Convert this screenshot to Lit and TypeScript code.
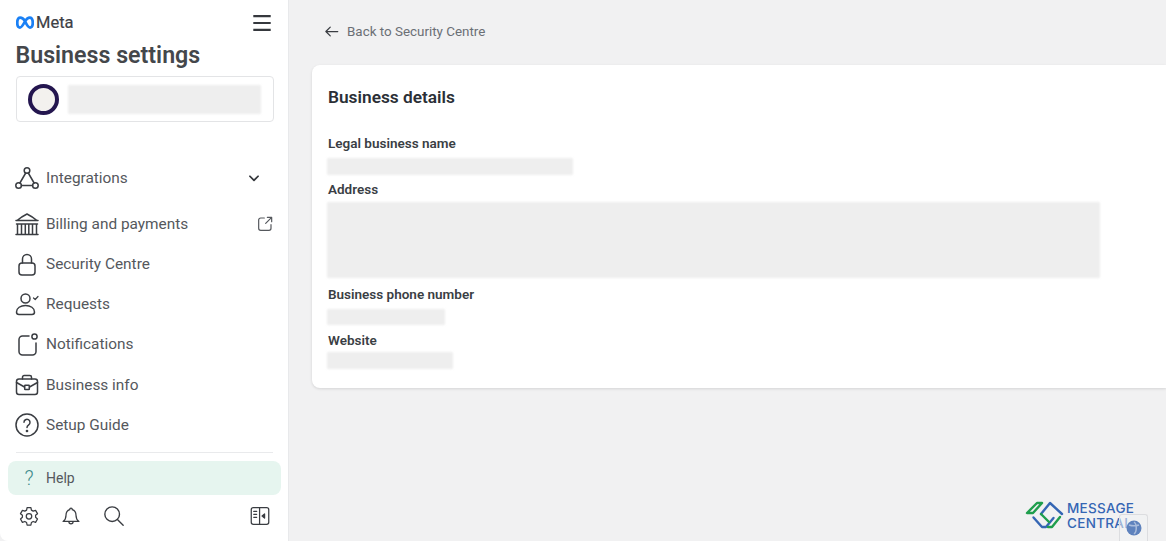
import { LitElement, html, css, svg } from "lit";
import { customElement } from "lit/decorators.js";

const I = (w: number, body: unknown) => html`<svg width=${w} height=${w} viewBox="0 0 24 24" fill="none" stroke="#3a3d42" stroke-width="1.5" stroke-linecap="round" stroke-linejoin="round">${body}</svg>`;

const nav = [
  { label: "Integrations", cls: "first", end: "chev", icon: svg`<circle cx="12" cy="4.500" r="2.800"/><circle cx="3.600" cy="19.500" r="2.800"/><circle cx="20.400" cy="19.500" r="2.800"/><path d="M10.700 7 4.900 17M13.300 7l5.800 10M6.400 19.500h11.200"/>` },
  { label: "Billing and payments", cls: "second", end: "ext", icon: svg`<path d="M2 8.500C5 6 9 3.500 12 2c3 1.500 7 4 10 6.500zM1 8.500h22M1.500 12h21M1 22.500h22M2.500 12v10.500M6.500 12v10.500M10.300 12v10.500M13.800 12v10.500M17.500 12v10.500M21.500 12v10.500"/>` },
  { label: "Security Centre", cls: "", end: "", icon: svg`<rect x="4" y="11" width="16" height="12" rx="3"/><path d="M7.500 11V7a4.500 4.500 0 0 1 9 0v4"/>` },
  { label: "Requests", cls: "", end: "", icon: svg`<circle cx="10.500" cy="6.500" r="4.500"/><path d="M1.500 20c0-4 4-6.500 9-6.500s9 2.500 9 6.500c0 1.700-1 2.500-2.500 2.500H4c-1.500 0-2.500-.8-2.500-2.500z"/><path d="m18.500 6 1.700 1.500L23 4.500" stroke-width="1.200"/>` },
  { label: "Notifications", cls: "", end: "", icon: svg`<path d="M14 4H7.500A3.500 3.500 0 0 0 4 7.500v12A3.500 3.500 0 0 0 7.500 23h10a3.500 3.500 0 0 0 3.500-3.500V11"/><circle cx="19.500" cy="4.500" r="2.600"/>` },
  { label: "Business info", cls: "", end: "", icon: svg`<rect x="1.500" y="6" width="21" height="15.500" rx="2.500"/><path d="M7.500 6V4.200c0-1 .7-1.700 1.700-1.700h5.600c1 0 1.700.7 1.700 1.700V6M1.500 9.500 9.500 14M22.500 9.500 14.500 14"/><rect x="9.700" y="12.300" width="4.600" height="4.200" rx=".6"/>` },
  { label: "Setup Guide", cls: "", end: "", icon: svg`<circle cx="12" cy="12" r="11"/><path d="M9 9.300a3 3 0 1 1 4.700 2.500c-1.100.8-1.700 1.400-1.700 2.700"/><circle cx="12" cy="18" r=".6" fill="#3a3d42"/>` },
];

@customElement("app-root")
export class AppRoot extends LitElement {
  static styles = css`
    :host { display: block; width: 1166px; height: 541px; overflow: hidden; position: relative; font-family: Roboto, "Liberation Sans", sans-serif; color: #4b4f56; }
    * { box-sizing: border-box; }
    svg { display: block; flex: none; }
    .page { display: flex; height: 541px; background: #f1f1f2; }
    .side { width: 289px; flex: none; height: 541px; background: #fff; border-right: 1px solid #e8e9eb; border-bottom-left-radius: 8px; padding: 0 15px; display: flex; flex-direction: column; }
    .top { display: flex; align-items: center; justify-content: space-between; height: 45px; padding-left: 1px; }
    .brand { display: flex; align-items: center; gap: 2px; font-size: 16.500px; font-weight: 400; color: #3d4045; -webkit-text-stroke: .2px #3d4045; }
    .title { font-size: 23.200px; line-height: 27px; font-weight: 600; color: #44474b; margin: -3px 0 0 .5px; white-space: nowrap; }
    .account { margin: 7px 0 0 .5px; width: 258px; height: 46px; border: 1px solid #e3e4e6; border-radius: 4px; display: flex; align-items: center; gap: 9px; padding: 0 11px; }
    .avatar { width: 31px; height: 31px; border-radius: 50%; border: 4px solid #24164f; background: #f3f1ee; flex: none; }
    .blur { background: #eeeeee; filter: blur(1px); border-radius: 1px; }
    .acct-name { width: 193px; height: 29px; }
    .nav { margin-top: 35.500px; display: flex; flex-direction: column; }
    .item { height: 40.400px; display: flex; align-items: center; gap: 7px; font-size: 15.400px; color: #55585d; white-space: nowrap; }
    .item.first { height: 40px; margin-bottom: 6px; }
    .item.second { height: 40px; }
    .item .ico { width: 24px; display: flex; justify-content: center; flex: none; }
    .end { margin-left: auto; }
    .end.chev { margin-right: 12px; }
    .rule { height: 1px; background: #e9eaec; margin: 6.500px 1px 8px 1px; width: 257px; flex: none; }
    .help { margin: 0 -7px; height: 34px; width: 273px; flex: none; background: #e6f5ef; border-radius: 8px; display: flex; align-items: center; gap: 10px; padding-left: 14px; font-size: 14px; color: #55585d; }
    .q { width: 14px; text-align: center; font-size: 20px; color: #3f8c8c; font-weight: 300; }
    .tools { margin-top: 10px; display: flex; align-items: center; gap: 22px; padding: 0 3px 0 4px; }
    .tools .right { margin-left: auto; }
    .main { flex: 1; min-width: 0; padding: 0 0 0 23px; }
    .back { height: 65px; display: flex; align-items: center; gap: 8px; padding: 0 0 3px 12px; font-size: 13.400px; color: #6b6f75; }
    .card { height: 323px; background: #fff; border-radius: 8px 0 0 8px; box-shadow: 0 1px 3px rgba(0,0,0,.12); padding: 19px 0 0 16px; }
    h2 { margin: 0; font-size: 17.300px; line-height: 26px; font-weight: 600; color: #2b2f36; }
    .label { font-size: 13.500px; line-height: 20px; font-weight: 600; color: #3a3e44; }
    .first-label { margin-top: 23px; }
    .f1 { width: 246px; height: 17px; margin: 5px 0 4px -1px; }
    .f2 { width: 773px; height: 76px; margin: 3px 0 6px -1px; }
    .f3 { width: 118px; height: 16px; margin: 5px 0 5px -1px; }
    .f4 { width: 126px; height: 17px; margin: 2px 0 0 -1px; }
    .mark { position: absolute; left: 1025px; top: 500px; display: flex; align-items: center; gap: 3px; }
    .mark-text { font-size: 13.500px; line-height: 14.500px; padding-top: 1px; font-weight: 500; color: #3566b4; letter-spacing: .3px; font-family: Inter, Roboto, sans-serif; }
    .badge { position: absolute; left: 1119px; top: 514px; width: 29px; height: 27px; background: rgba(241,242,244,.55); border: 1px solid #dcdde0; border-bottom: none; border-radius: 3px 3px 0 0; display: flex; align-items: center; justify-content: center; }
  `;

  private endIcon(e: string) {
    if (e === "chev") return html`<span class="end chev">${I(14, svg`<path d="m5 9 7 7 7-7" stroke-width="3" stroke="#33363b"/>`)}</span>`;
    if (e === "ext") return html`<span class="end">${I(16, svg`<path d="M11 3H5.500A3 3 0 0 0 2.500 6v12.500a3 3 0 0 0 3 3H18a3 3 0 0 0 3-3V13M13 11 22 2M15.500 2H22v6.500" stroke-width="1.800" stroke="#55585d"/>`)}</span>`;
    return "";
  }

  render() {
    return html`
      <div class="page">
        <aside class="side">
          <div class="top">
            <div class="brand">
              <svg width="18" height="13" viewBox="0 0 36 26" fill="none" stroke="#1a80f5" stroke-width="5.500" stroke-linecap="round"><path d="M18 10C15 5 12 3 8.500 3 4.500 3 2.500 8 2.500 14c0 5.500 2 9 5.500 9 3.500 0 5.500-3.500 10-12.500C22 4 24.500 3 27.500 3c4 0 6 5.500 6 11s-2 9-5.500 9c-4 0-6.500-5-10-13"/></svg>
              <span>Meta</span>
            </div>
            ${I(22, svg`<path d="M2.500 4.500h19M2.500 12h19M2.500 19.500h19" stroke-width="2.400" stroke="#35383d" stroke-linecap="butt"/>`)}
          </div>
          <div class="title">Business settings</div>
          <div class="account"><div class="avatar"></div><div class="blur acct-name"></div></div>
          <nav class="nav">
            ${nav.map((n) => html`<div class="item ${n.cls}"><span class="ico">${I(24, n.icon)}</span><span>${n.label}</span>${this.endIcon(n.end)}</div>`)}
          </nav>
          <div class="rule"></div>
          <div class="help"><span class="q">?</span><span>Help</span></div>
          <div class="tools">
            ${I(20, svg`<path d="M9.700 2h4.600l.6 3 2.100 1.200 2.900-1 2.300 4-2.300 2v2.400l2.300 2-2.300 4-2.900-1-2.100 1.200-.6 3H9.700l-.6-3L7 18.600l-2.900 1-2.300-4 2.300-2v-2.400l-2.300-2 2.300-4 2.900 1L9.100 5z"/><circle cx="12" cy="12.300" r="3.300"/>`)}
            ${I(20, svg`<path d="M12 2.500a1.500 1.500 0 0 0-1.500 1.500v.4C7.500 5.300 6 8 6 11c0 4-1.500 6-3.500 7.500h19C19.500 17 18 15 18 11c0-3-1.500-5.700-4.500-6.600V4A1.500 1.500 0 0 0 12 2.500zM9.500 19a2.500 2.500 0 0 0 5 0"/>`)}
            ${I(22, svg`<circle cx="10" cy="10" r="8"/><path d="m16 16 6 6"/>`)}
            <span class="right">${I(20, svg`<rect x="1.500" y="2" width="21" height="20" rx="2.500"/><path d="M11.500 2v20M4.500 6.500H8M4.500 10H8M4.500 13.500H8"/><path d="m17.500 9.500-3 2.500 3 2.500z" fill="#3a3d42"/>`)}</span>
          </div>
        </aside>
        <main class="main">
          <div class="back">
            ${I(15, svg`<path d="M22 12H3M10 5l-7 7 7 7" stroke-width="2"/>`)}
            <span>Back to Security Centre</span>
          </div>
          <section class="card">
            <h2>Business details</h2>
            <div class="label first-label">Legal business name</div>
            <div class="blur f1"></div>
            <div class="label">Address</div>
            <div class="blur f2"></div>
            <div class="label">Business phone number</div>
            <div class="blur f3"></div>
            <div class="label">Website</div>
            <div class="blur f4"></div>
          </section>
        </main>
      </div>
      <div class="mark">
        <svg width="39" height="30" viewBox="0 0 39 30" fill="none" stroke-width="2.400" stroke-linejoin="round" stroke-linecap="round">
          <path d="M2 13h6l9-10h-5z" stroke="#1f9e4d"/>
          <path d="M16 14l9-11 12 11" stroke="#3566b4"/>
          <path d="M8.500 17.500 17 27h4l7.500-9" stroke="#3566b4"/>
          <path d="M16 14l8 8M23 27h4l8-10" stroke="#1f9e4d"/>
        </svg>
        <div class="mark-text">MESSAGE<br />CENTRAL</div>
      </div>
      <div class="badge">
        <svg width="16" height="16" viewBox="0 0 16 16"><circle cx="8" cy="8" r="7.500" fill="#5e82bd"/><path d="M8 2c3 2 3 10 0 12M3 5c3 1 7 1 10 0" fill="none" stroke="#a9bcdc" stroke-width="1.500"/></svg>
      </div>
    `;
  }
}
